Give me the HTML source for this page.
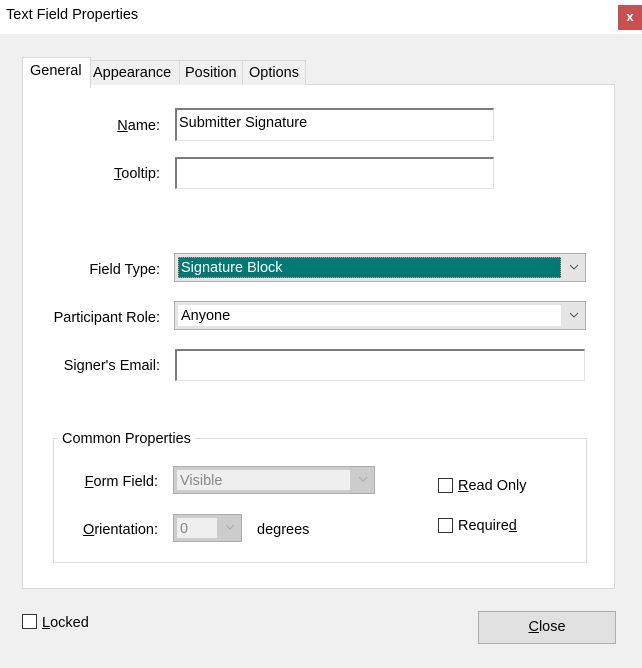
<!DOCTYPE html><html><head><style>
body{margin:0;width:642px;height:668px;background:#f0f0f0;font-family:"Liberation Sans",sans-serif;font-size:14.5px;color:#000;position:relative;overflow:hidden}
.a{position:absolute}
.lbl{position:absolute;text-align:right;width:200px}
.tb{position:absolute;background:#fff;border:1px solid #e3e3e3;border-top:2px solid #7a7a7a;border-left:2px solid #7a7a7a;box-sizing:border-box}
.cb{position:absolute;box-sizing:border-box;border:1px solid #adadad;background:#e5e5e5}
.cb .in{position:absolute;left:3px;top:3px;bottom:3px;background:#fff;padding-left:3px;line-height:22px}
.chev{position:absolute;right:6px;top:50%;margin-top:-4px}
.chk{position:absolute;width:13px;height:13px;border:1px solid #333;background:#fff}
u{text-decoration:underline}
</style></head><body>
<div class="a" style="left:0;top:0;width:642px;height:34px;background:#fff"></div>
<div class="a" style="left:6px;top:7px;font-size:14.5px">Text Field Properties</div>
<div class="a" style="left:618px;top:5px;width:24px;height:25px;background:#c75050;color:#fff;text-align:center;line-height:24px;font-weight:bold;font-size:13px">x</div>

<div class="a" style="left:22px;top:84px;width:591px;height:503px;background:#fff;border:1px solid #d9d9d9"></div>
<div class="a" style="left:89px;top:60px;width:215px;height:24px;background:#f0f0f0;border:1px solid #d9d9d9;border-bottom:none"></div>
<div class="a" style="left:179px;top:60px;width:1px;height:24px;background:#d9d9d9"></div>
<div class="a" style="left:242px;top:60px;width:1px;height:24px;background:#d9d9d9"></div>
<div class="a" style="left:22px;top:57px;width:67px;height:30px;background:#fff;border:1px solid #d9d9d9;border-bottom:none"></div>
<div class="a" style="left:30px;top:63px">General</div>
<div class="a" style="left:93px;top:65px">Appearance</div>
<div class="a" style="left:185px;top:65px">Position</div>
<div class="a" style="left:249px;top:65px">Options</div>

<div class="lbl" style="left:-40px;top:118px"><u>N</u>ame:</div>
<div class="tb" style="left:175px;top:108px;width:319px;height:33px;padding:5px 0 0 2px">Submitter Signature</div>
<div class="lbl" style="left:-40px;top:166px"><u>T</u>ooltip:</div>
<div class="tb" style="left:175px;top:157px;width:319px;height:32px"></div>

<div class="lbl" style="left:-40px;top:262px">Field Type:</div>
<div class="cb" style="left:174px;top:253px;width:412px;height:29px"><div class="in" style="right:24px;background:#007874;color:#fff;outline:1px dotted #e88;outline-offset:-1px">Signature Block</div>
<svg class="chev" width="10" height="6"><path d="M1 1L5 5L9 1" stroke="#555" fill="none"/></svg></div>
<div class="lbl" style="left:-40px;top:310px">Participant Role:</div>
<div class="cb" style="left:174px;top:301px;width:412px;height:29px"><div class="in" style="right:24px">Anyone</div>
<svg class="chev" width="10" height="6"><path d="M1 1L5 5L9 1" stroke="#555" fill="none"/></svg></div>
<div class="lbl" style="left:-40px;top:358px">Signer's Email:</div>
<div class="tb" style="left:175px;top:349px;width:410px;height:32px"></div>

<div class="a" style="left:53px;top:438px;width:532px;height:123px;border:1px solid #dcdcdc"></div>
<div class="a" style="left:58px;top:431px;background:#fff;padding:0 4px">Common Properties</div>
<div class="lbl" style="left:-42px;top:474px"><u>F</u>orm Field:</div>
<div class="cb" style="left:173px;top:466px;width:202px;height:28px;background:#ccc"><div class="in" style="right:24px;background:#efefef;color:#888">Visible</div>
<svg class="chev" width="10" height="6"><path d="M1 1L5 5L9 1" stroke="#aaa" fill="none"/></svg></div>
<div class="lbl" style="left:-42px;top:522px"><u>O</u>rientation:</div>
<div class="cb" style="left:173px;top:514px;width:69px;height:28px;background:#ccc"><div class="in" style="right:24px;background:#efefef;color:#888">0</div>
<svg class="chev" width="10" height="6"><path d="M1 1L5 5L9 1" stroke="#aaa" fill="none"/></svg></div>
<div class="a" style="left:257px;top:522px">degrees</div>
<div class="chk" style="left:438px;top:478px"></div>
<div class="a" style="left:458px;top:478px"><u>R</u>ead Only</div>
<div class="chk" style="left:438px;top:518px"></div>
<div class="a" style="left:458px;top:518px">Require<u>d</u></div>

<div class="chk" style="left:22px;top:614px;border-color:#333"></div>
<div class="a" style="left:42px;top:615px"><u>L</u>ocked</div>
<div class="a" style="left:478px;top:611px;width:136px;height:31px;background:#e1e1e1;border:1px solid #adadad;text-align:center;line-height:31px"><u>C</u>lose</div>
</body></html>
